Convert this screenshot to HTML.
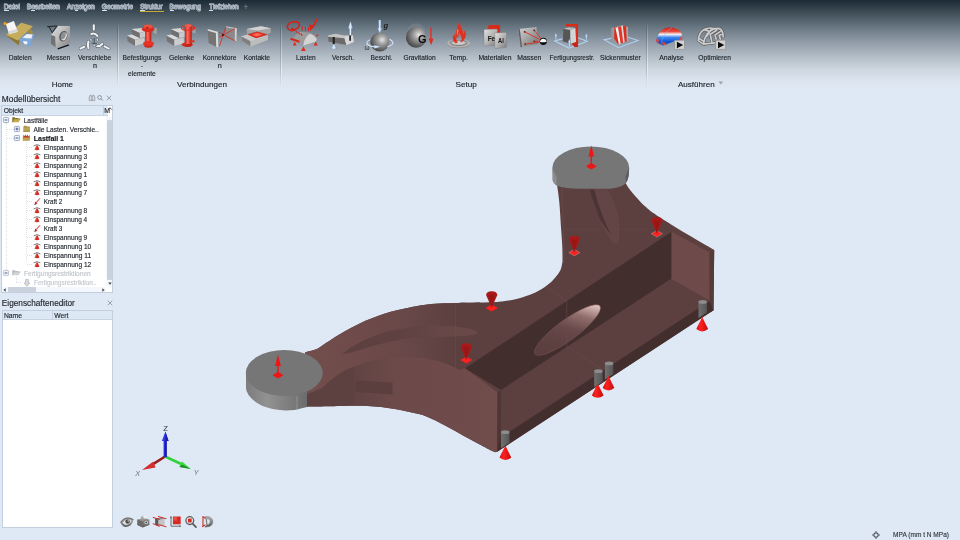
<!DOCTYPE html>
<html lang="de"><head><meta charset="utf-8"><title>Struktur</title>
<style>
html,body{margin:0;padding:0;}
body{width:960px;height:540px;overflow:hidden;background:#dfe9f5;font-family:"Liberation Sans",sans-serif;}
#app{position:relative;width:960px;height:540px;overflow:hidden;background:#dfe9f5;}
.r{position:absolute;}
svg{position:absolute;overflow:visible;}
#txt{pointer-events:none;will-change:transform;}
#icons{filter:blur(.3px);}
#txt text{font-family:"Liberation Sans",sans-serif;white-space:pre;}
.m{stroke:#dde8f4;stroke-opacity:.95;stroke-width:.9px;stroke-linejoin:round;filter:blur(.25px);}
.mc{fill-opacity:.5;}

#ribbon{position:absolute;left:0;top:0;width:960px;height:92px;background:linear-gradient(to bottom,#1b2a34 0px,#37464f 10px,#54626d 20px,#707e8a 30px,#8b97a3 40px,#a4aeb9 50px,#bac4cd 60px,#ced7e0 70px,#dbe4ee 80px,#dfe9f5 90px);}

</style></head>
<body>
<div id="app">
<div id="ribbon"></div>
<div class="r" style="left:3.8px;top:10.3px;width:5.01px;height:0.8px;background:#d3dfec;"></div>
<div class="r" style="left:31.28px;top:10.3px;width:3.82px;height:0.8px;background:#d3dfec;"></div>
<div class="r" style="left:75.15px;top:10.3px;width:3.33px;height:0.8px;background:#d3dfec;"></div>
<div class="r" style="left:101.7px;top:10.3px;width:5.21px;height:0.8px;background:#d3dfec;"></div>
<div class="r" style="left:140.3px;top:10.3px;width:4.23px;height:0.8px;background:#d3dfec;"></div>
<div class="r" style="left:169.5px;top:10.3px;width:4.45px;height:0.8px;background:#d3dfec;"></div>
<div class="r" style="left:209.2px;top:10.3px;width:3.94px;height:0.8px;background:#d3dfec;"></div>
<div class="r" style="left:140px;top:11.4px;width:23.5px;height:1.1px;background:#c9a93c;"></div>
<svg style="left:718px;top:81px" width="6" height="4" viewBox="0 0 6 4"><path d="M0.5 0.5h4.6l-2.3 3z" fill="#9aa3ad"/></svg>
<div class="r" style="left:117.3px;top:21px;width:1px;height:67px;background:linear-gradient(to bottom,rgba(60,75,88,0),rgba(60,75,88,.35) 15%,rgba(120,135,150,.35) 70%,rgba(150,165,180,0));"></div>
<div class="r" style="left:118.3px;top:21px;width:1px;height:67px;background:linear-gradient(to bottom,rgba(255,255,255,0),rgba(255,255,255,.18) 15%,rgba(255,255,255,.5) 70%,rgba(255,255,255,0));"></div>
<div class="r" style="left:280.3px;top:21px;width:1px;height:67px;background:linear-gradient(to bottom,rgba(60,75,88,0),rgba(60,75,88,.35) 15%,rgba(120,135,150,.35) 70%,rgba(150,165,180,0));"></div>
<div class="r" style="left:281.3px;top:21px;width:1px;height:67px;background:linear-gradient(to bottom,rgba(255,255,255,0),rgba(255,255,255,.18) 15%,rgba(255,255,255,.5) 70%,rgba(255,255,255,0));"></div>
<div class="r" style="left:646.3px;top:21px;width:1px;height:67px;background:linear-gradient(to bottom,rgba(60,75,88,0),rgba(60,75,88,.35) 15%,rgba(120,135,150,.35) 70%,rgba(150,165,180,0));"></div>
<div class="r" style="left:647.3px;top:21px;width:1px;height:67px;background:linear-gradient(to bottom,rgba(255,255,255,0),rgba(255,255,255,.18) 15%,rgba(255,255,255,.5) 70%,rgba(255,255,255,0));"></div>
<div class="r" style="left:0.5px;top:104.5px;width:112px;height:188.3px;background:#fff;box-sizing:border-box;border:1px solid #c3cfde;"></div>
<div class="r" style="left:1.5px;top:105.5px;width:110px;height:10.3px;background:#dde8f5;border-bottom:1px solid #c9d4e2;box-sizing:border-box;"></div>
<div class="r" style="left:103px;top:105.5px;width:1px;height:10px;background:#c3cfde;"></div>
<div class="r" style="left:106.3px;top:116px;width:5.7px;height:170.5px;background:#f4f7fb;"></div>
<div class="r" style="left:107px;top:119.5px;width:4.6px;height:160px;background:#c9d1dd;border-radius:1px;"></div>
<div class="r" style="left:108px;top:105.8px;width:4px;height:11px;background:#fff;"></div>
<svg style="left:107.5px;top:107px" width="4" height="3" viewBox="0 0 4 3"><path d="M0.3 2.6L2 0.6L3.7 2.6" fill="none" stroke="#444" stroke-width="0.9"/></svg>
<svg style="left:107.5px;top:282px" width="4" height="3" viewBox="0 0 4 3"><path d="M0.2 0.4H3.8L2 2.7z" fill="#444"/></svg>
<div class="r" style="left:1.5px;top:286.7px;width:104.8px;height:5.6px;background:#f4f7fb;"></div>
<div class="r" style="left:7.5px;top:287.2px;width:28px;height:4.8px;background:#c9d1dd;border-radius:1px;"></div>
<svg style="left:3px;top:288px" width="3" height="4" viewBox="0 0 3 4"><path d="M2.7 0.2V3.8L0.4 2z" fill="#444"/></svg>
<svg style="left:101.5px;top:288px" width="3" height="4" viewBox="0 0 3 4"><path d="M0.3 0.2V3.8L2.6 2z" fill="#444"/></svg>
<div class="r" style="left:1.5px;top:310px;width:111px;height:218px;background:#fff;box-sizing:border-box;border:1px solid #c3cfde;"></div>
<div class="r" style="left:2.5px;top:311px;width:109px;height:9px;background:#dde8f5;border-bottom:1px solid #c9d4e2;box-sizing:border-box;"></div>
<div class="r" style="left:51.6px;top:311px;width:1px;height:9px;background:#c3cfde;"></div>
<svg style="left:106.3px;top:94.8px" width="6" height="6" viewBox="-3 -3 6 6"><path d="M-2.3 -2.3L2.3 2.3M2.3 -2.3L-2.3 2.3" stroke="#8a9098" stroke-width="0.8" fill="none"/></svg>
<svg style="left:106.5px;top:299.5px" width="6" height="6" viewBox="-3 -3 6 6"><path d="M-2.3 -2.3L2.3 2.3M2.3 -2.3L-2.3 2.3" stroke="#8a9098" stroke-width="0.8" fill="none"/></svg>
<svg style="left:871px;top:530px" width="10" height="10" viewBox="-5 -5 10 10"><circle r="2.1" fill="none" stroke="#55595f" stroke-width="1.1"/><path d="M0 -4V-2.4M0 4V2.4M-4 0H-2.4M4 0H2.4" stroke="#55595f" stroke-width="1"/></svg>
<div class="r" style="left:6px;top:123px;width:1px;height:148px;background:repeating-linear-gradient(to bottom,#dde1e7 0 1px,transparent 1px 2px);"></div>
<div class="r" style="left:26px;top:141.5px;width:1px;height:120.5px;background:repeating-linear-gradient(to bottom,#dde1e7 0 1px,transparent 1px 2px);"></div>
<div class="r" style="left:7px;top:129px;width:7px;height:1px;background:repeating-linear-gradient(to right,#dde1e7 0 1px,transparent 1px 2px);"></div>
<div class="r" style="left:7px;top:138px;width:7px;height:1px;background:repeating-linear-gradient(to right,#dde1e7 0 1px,transparent 1px 2px);"></div>
<svg style="left:3.25px;top:117.1px" width="6" height="6" viewBox="-3 -3 6 6"><rect x="-2.6" y="-2.6" width="5.2" height="5.2" rx=".9" fill="#eef2fa" stroke="#8798b8" stroke-width="0.8"/><path d="M-1.4 0H1.4" stroke="#2a3a6a" stroke-width="0.8"/></svg>
<svg style="left:13.5px;top:126.1px" width="6" height="6" viewBox="-3 -3 6 6"><rect x="-2.6" y="-2.6" width="5.2" height="5.2" rx=".9" fill="#eef2fa" stroke="#8798b8" stroke-width="0.8"/><path d="M-1.4 0H1.4M0 -1.4V1.4" stroke="#2a3a6a" stroke-width="0.8"/></svg>
<svg style="left:13.5px;top:135.1px" width="6" height="6" viewBox="-3 -3 6 6"><rect x="-2.6" y="-2.6" width="5.2" height="5.2" rx=".9" fill="#eef2fa" stroke="#8798b8" stroke-width="0.8"/><path d="M-1.4 0H1.4" stroke="#2a3a6a" stroke-width="0.8"/></svg>
<svg style="left:12.3px;top:116.4px;opacity:1" width="9" height="7" viewBox="0 0 9 7"><path d="M0.3 6.2V1.2H2.6L3.3 2H6.2V3" fill="#7e6c2c"/><path d="M0.3 6.3L2 2.8H8.6L6.6 6.3z" fill="#c2aa52"/><path d="M0.3 6.3L2 2.8H8.6" fill="none" stroke="#7e6c2c" stroke-width=".5"/></svg>
<svg style="left:22.8px;top:124.8px" width="8" height="8" viewBox="0 0 8 8"><path d="M0.5 7V1.6L1.2 0.8H3.2L3.9 1.6H6.8V7z" fill="#a8924a"/><path d="M0.5 7V2.6H6.8V7z" fill="#bfa656"/><path d="M0.5 7L1.5 6H6.8" stroke="#8a7533" stroke-width=".5" fill="none"/></svg>
<svg style="left:22.3px;top:134.2px" width="9" height="7" viewBox="0 0 9 7"><path d="M0.8 6.6V2.8H7.6V6.6z" fill="#a68d42"/><path d="M0.6 6.6L1.6 3.6H8.4L7.3 6.6z" fill="#c0a553"/><path d="M1.2 3.2L1.6 0.6L2.8 2.6L3.6 0.2L4.6 2.6L5.8 0.4L6.3 2.7L7.8 0.9L7.6 3.4z" fill="#cc2a1e"/></svg>
<div class="r" style="left:27px;top:147px;width:5px;height:1px;background:repeating-linear-gradient(to right,#dde1e7 0 1px,transparent 1px 2px);"></div>
<svg style="left:32.8px;top:143.55px" width="8" height="7" viewBox="0 0 8 7"><path d="M0.6 1.9Q4 -0.6 7.4 1.9" fill="none" stroke="#6d7075" stroke-width="0.9"/><path d="M3.4 1.6H4.6L6.5 5.6Q4 7 1.5 5.6z" fill="#d42a22"/><path d="M3.6 2.2L2.3 5.4" stroke="#f08a80" stroke-width=".6"/></svg>
<div class="r" style="left:27px;top:156px;width:5px;height:1px;background:repeating-linear-gradient(to right,#dde1e7 0 1px,transparent 1px 2px);"></div>
<svg style="left:32.8px;top:152.55px" width="8" height="7" viewBox="0 0 8 7"><path d="M0.6 1.9Q4 -0.6 7.4 1.9" fill="none" stroke="#6d7075" stroke-width="0.9"/><path d="M3.4 1.6H4.6L6.5 5.6Q4 7 1.5 5.6z" fill="#d42a22"/><path d="M3.6 2.2L2.3 5.4" stroke="#f08a80" stroke-width=".6"/></svg>
<div class="r" style="left:27px;top:165px;width:5px;height:1px;background:repeating-linear-gradient(to right,#dde1e7 0 1px,transparent 1px 2px);"></div>
<svg style="left:32.8px;top:161.55px" width="8" height="7" viewBox="0 0 8 7"><path d="M0.6 1.9Q4 -0.6 7.4 1.9" fill="none" stroke="#6d7075" stroke-width="0.9"/><path d="M3.4 1.6H4.6L6.5 5.6Q4 7 1.5 5.6z" fill="#d42a22"/><path d="M3.6 2.2L2.3 5.4" stroke="#f08a80" stroke-width=".6"/></svg>
<div class="r" style="left:27px;top:174px;width:5px;height:1px;background:repeating-linear-gradient(to right,#dde1e7 0 1px,transparent 1px 2px);"></div>
<svg style="left:32.8px;top:170.55px" width="8" height="7" viewBox="0 0 8 7"><path d="M0.6 1.9Q4 -0.6 7.4 1.9" fill="none" stroke="#6d7075" stroke-width="0.9"/><path d="M3.4 1.6H4.6L6.5 5.6Q4 7 1.5 5.6z" fill="#d42a22"/><path d="M3.6 2.2L2.3 5.4" stroke="#f08a80" stroke-width=".6"/></svg>
<div class="r" style="left:27px;top:183px;width:5px;height:1px;background:repeating-linear-gradient(to right,#dde1e7 0 1px,transparent 1px 2px);"></div>
<svg style="left:32.8px;top:179.55px" width="8" height="7" viewBox="0 0 8 7"><path d="M0.6 1.9Q4 -0.6 7.4 1.9" fill="none" stroke="#6d7075" stroke-width="0.9"/><path d="M3.4 1.6H4.6L6.5 5.6Q4 7 1.5 5.6z" fill="#d42a22"/><path d="M3.6 2.2L2.3 5.4" stroke="#f08a80" stroke-width=".6"/></svg>
<div class="r" style="left:27px;top:192px;width:5px;height:1px;background:repeating-linear-gradient(to right,#dde1e7 0 1px,transparent 1px 2px);"></div>
<svg style="left:32.8px;top:188.55px" width="8" height="7" viewBox="0 0 8 7"><path d="M0.6 1.9Q4 -0.6 7.4 1.9" fill="none" stroke="#6d7075" stroke-width="0.9"/><path d="M3.4 1.6H4.6L6.5 5.6Q4 7 1.5 5.6z" fill="#d42a22"/><path d="M3.6 2.2L2.3 5.4" stroke="#f08a80" stroke-width=".6"/></svg>
<div class="r" style="left:27px;top:201px;width:5px;height:1px;background:repeating-linear-gradient(to right,#dde1e7 0 1px,transparent 1px 2px);"></div>
<svg style="left:32.6px;top:197.55px" width="8" height="7" viewBox="0 0 8 7"><path d="M7 0.3L3.2 4.6" stroke="#c8201a" stroke-width="1"/><path d="M1.6 6.4L2.2 3.6L4.6 5.6z" fill="#c8201a"/><path d="M0.8 6.2Q2 7 3.4 6.4" stroke="#777" stroke-width=".7" fill="none"/></svg>
<div class="r" style="left:27px;top:210px;width:5px;height:1px;background:repeating-linear-gradient(to right,#dde1e7 0 1px,transparent 1px 2px);"></div>
<svg style="left:32.8px;top:206.55px" width="8" height="7" viewBox="0 0 8 7"><path d="M0.6 1.9Q4 -0.6 7.4 1.9" fill="none" stroke="#6d7075" stroke-width="0.9"/><path d="M3.4 1.6H4.6L6.5 5.6Q4 7 1.5 5.6z" fill="#d42a22"/><path d="M3.6 2.2L2.3 5.4" stroke="#f08a80" stroke-width=".6"/></svg>
<div class="r" style="left:27px;top:219px;width:5px;height:1px;background:repeating-linear-gradient(to right,#dde1e7 0 1px,transparent 1px 2px);"></div>
<svg style="left:32.8px;top:215.55px" width="8" height="7" viewBox="0 0 8 7"><path d="M0.6 1.9Q4 -0.6 7.4 1.9" fill="none" stroke="#6d7075" stroke-width="0.9"/><path d="M3.4 1.6H4.6L6.5 5.6Q4 7 1.5 5.6z" fill="#d42a22"/><path d="M3.6 2.2L2.3 5.4" stroke="#f08a80" stroke-width=".6"/></svg>
<div class="r" style="left:27px;top:228px;width:5px;height:1px;background:repeating-linear-gradient(to right,#dde1e7 0 1px,transparent 1px 2px);"></div>
<svg style="left:32.6px;top:224.55px" width="8" height="7" viewBox="0 0 8 7"><path d="M7 0.3L3.2 4.6" stroke="#c8201a" stroke-width="1"/><path d="M1.6 6.4L2.2 3.6L4.6 5.6z" fill="#c8201a"/><path d="M0.8 6.2Q2 7 3.4 6.4" stroke="#777" stroke-width=".7" fill="none"/></svg>
<div class="r" style="left:27px;top:237px;width:5px;height:1px;background:repeating-linear-gradient(to right,#dde1e7 0 1px,transparent 1px 2px);"></div>
<svg style="left:32.8px;top:233.55px" width="8" height="7" viewBox="0 0 8 7"><path d="M0.6 1.9Q4 -0.6 7.4 1.9" fill="none" stroke="#6d7075" stroke-width="0.9"/><path d="M3.4 1.6H4.6L6.5 5.6Q4 7 1.5 5.6z" fill="#d42a22"/><path d="M3.6 2.2L2.3 5.4" stroke="#f08a80" stroke-width=".6"/></svg>
<div class="r" style="left:27px;top:246px;width:5px;height:1px;background:repeating-linear-gradient(to right,#dde1e7 0 1px,transparent 1px 2px);"></div>
<svg style="left:32.8px;top:242.55px" width="8" height="7" viewBox="0 0 8 7"><path d="M0.6 1.9Q4 -0.6 7.4 1.9" fill="none" stroke="#6d7075" stroke-width="0.9"/><path d="M3.4 1.6H4.6L6.5 5.6Q4 7 1.5 5.6z" fill="#d42a22"/><path d="M3.6 2.2L2.3 5.4" stroke="#f08a80" stroke-width=".6"/></svg>
<div class="r" style="left:27px;top:255px;width:5px;height:1px;background:repeating-linear-gradient(to right,#dde1e7 0 1px,transparent 1px 2px);"></div>
<svg style="left:32.8px;top:251.55px" width="8" height="7" viewBox="0 0 8 7"><path d="M0.6 1.9Q4 -0.6 7.4 1.9" fill="none" stroke="#6d7075" stroke-width="0.9"/><path d="M3.4 1.6H4.6L6.5 5.6Q4 7 1.5 5.6z" fill="#d42a22"/><path d="M3.6 2.2L2.3 5.4" stroke="#f08a80" stroke-width=".6"/></svg>
<div class="r" style="left:27px;top:264px;width:5px;height:1px;background:repeating-linear-gradient(to right,#dde1e7 0 1px,transparent 1px 2px);"></div>
<svg style="left:32.8px;top:260.55px" width="8" height="7" viewBox="0 0 8 7"><path d="M0.6 1.9Q4 -0.6 7.4 1.9" fill="none" stroke="#6d7075" stroke-width="0.9"/><path d="M3.4 1.6H4.6L6.5 5.6Q4 7 1.5 5.6z" fill="#d42a22"/><path d="M3.6 2.2L2.3 5.4" stroke="#f08a80" stroke-width=".6"/></svg>
<div class="r" style="left:16px;top:282px;width:6px;height:1px;background:repeating-linear-gradient(to right,#dde1e7 0 1px,transparent 1px 2px);"></div>
<div class="r" style="left:16px;top:277px;width:1px;height:5px;background:repeating-linear-gradient(to bottom,#dde1e7 0 1px,transparent 1px 2px);"></div>
<svg style="left:3.25px;top:270.1px" width="6" height="6" viewBox="-3 -3 6 6"><rect x="-2.6" y="-2.6" width="5.2" height="5.2" rx=".9" fill="#eef2fa" stroke="#b0b8c4" stroke-width="0.8"/><path d="M-1.4 0H1.4" stroke="#2a3a6a" stroke-width="0.8"/></svg>
<svg style="left:12.3px;top:269.4px;opacity:1" width="9" height="7" viewBox="0 0 9 7"><path d="M0.3 6.2V1.2H2.6L3.3 2H6.2V3" fill="#b5b8bc"/><path d="M0.3 6.3L2 2.8H8.6L6.6 6.3z" fill="#cfd2d6"/><path d="M0.3 6.3L2 2.8H8.6" fill="none" stroke="#b5b8bc" stroke-width=".5"/></svg>
<svg style="left:23px;top:278.6px" width="8" height="8" viewBox="0 0 8 8"><path d="M2.6 0.5H5.4V4H7L4 7.4L1 4H2.6z" fill="#d8dbde" stroke="#a9adb2" stroke-width=".6"/></svg>
<svg id="model" width="960" height="540" viewBox="0 0 960 540" style="left:0;top:0">
<defs>
<linearGradient id="gTop" gradientUnits="userSpaceOnUse" x1="305" y1="0" x2="480" y2="0">
<stop offset="0" stop-color="#724e4c"/><stop offset=".314" stop-color="#6e4b4a"/><stop offset=".537" stop-color="#694848"/><stop offset=".686" stop-color="#644545"/><stop offset=".794" stop-color="#5f4141"/><stop offset=".863" stop-color="#5c3f3f"/><stop offset="1" stop-color="#5c3f3f"/>
</linearGradient>
<linearGradient id="gGroove" gradientUnits="userSpaceOnUse" x1="341" y1="0" x2="480" y2="0">
<stop offset="0" stop-color="#5c3f3f"/><stop offset=".4" stop-color="#5f4141"/><stop offset=".7" stop-color="#664646"/><stop offset="1" stop-color="#6b4949"/>
</linearGradient>
<linearGradient id="gFront" gradientUnits="userSpaceOnUse" x1="307" y1="0" x2="497" y2="0">
<stop offset="0" stop-color="#5d4040"/><stop offset=".247" stop-color="#5d4040"/><stop offset=".249" stop-color="#614343"/><stop offset=".46" stop-color="#6c4a49"/><stop offset="1" stop-color="#704c4b"/>
</linearGradient>
<linearGradient id="gCyl" gradientUnits="userSpaceOnUse" x1="246" y1="0" x2="307" y2="0">
<stop offset="0" stop-color="#7c7c7c"/><stop offset=".35" stop-color="#929292"/><stop offset="1" stop-color="#6c6c6c"/>
</linearGradient>
<linearGradient id="gHole" gradientUnits="userSpaceOnUse" x1="537" y1="352" x2="598" y2="306">
<stop offset="0" stop-color="#583c3c"/><stop offset=".3" stop-color="#5e4141"/><stop offset=".52" stop-color="#694949"/><stop offset=".72" stop-color="#8f6e6c"/><stop offset=".88" stop-color="#d6b6b2"/><stop offset="1" stop-color="#f5e4e0"/>
</linearGradient>
<linearGradient id="gPin" x1="0" y1="0" x2="1" y2="0"><stop offset="0" stop-color="#707070"/><stop offset="1" stop-color="#565656"/></linearGradient>
<linearGradient id="gCone" x1="0" y1="0" x2="1" y2="0"><stop offset="0" stop-color="#d01010"/><stop offset=".35" stop-color="#ff2020"/><stop offset="1" stop-color="#c00c0c"/></linearGradient>
<g id="pinA"><path d="M0 0.8V17.6L8.4 12.2V0.8z" fill="url(#gPin)"/><ellipse cx="4.2" cy="1.6" rx="4.2" ry="1.9" fill="#8c8c8c"/></g>
<g id="coneUp"><path d="M0 0L-5.9 12Q0 16.8 5.9 12z" fill="url(#gCone)"/></g>
<g id="coneDn"><path d="M0 0L-5.6 -13Q-5.4 -16.6 0 -16.8Q5.4 -16.6 5.6 -13z" fill="#a81a1a"/><path d="M0 -1L-3.2 -13.5Q0 -12 3.2 -13.5z" fill="#8e1414" opacity=".6"/></g>
</defs>
<path id="sil" fill="#5c3f3f" d="M305.2 352.2C307.1 351.7 313.4 350.5 316.8 349.0C320.2 347.5 322.2 345.5 325.9 343.1C329.6 340.7 334.6 337.3 338.9 334.7C343.2 332.1 347.5 329.9 351.8 327.6C356.1 325.3 360.5 323.1 364.8 321.1C369.1 319.2 373.5 317.4 377.8 315.9C382.1 314.3 386.4 313.0 390.7 311.8C395.0 310.6 398.8 309.8 403.7 308.8C408.6 307.8 414.8 306.4 420.0 305.6C425.2 304.8 429.2 304.2 435.0 303.8C440.8 303.4 447.5 303.2 455.0 303.0C462.5 302.8 473.0 302.7 480.0 302.5C487.0 302.3 491.4 302.5 497.0 302.0C502.6 301.5 507.8 300.9 513.3 299.7C518.8 298.5 525.5 296.3 530.0 294.7C534.5 293.1 536.7 291.9 540.0 290.0C543.3 288.1 547.2 285.4 550.0 283.0C552.8 280.6 554.9 278.1 556.7 275.8C558.5 273.5 559.8 271.6 560.8 269.2C561.8 266.8 562.2 262.9 562.5 261.7C562.5 259.2 562.5 252.0 562.3 246.7C562.1 241.4 561.7 237.4 561.2 230.0C560.7 222.6 560.0 209.5 559.3 202.2C558.6 194.9 557.6 188.7 557.2 186.0L625.5 183.0C626.0 183.8 627.4 186.2 628.6 188.0C629.9 189.8 631.5 191.7 633.0 193.5C634.5 195.3 636.2 197.1 637.5 198.6C638.8 200.1 639.5 200.9 641.0 202.4C642.5 203.9 644.5 205.8 646.5 207.6C648.5 209.4 649.2 210.2 653.3 213.0C657.4 215.8 664.4 220.3 671.1 224.4C677.8 228.5 686.1 233.5 693.3 237.8C700.5 242.1 710.7 248.0 714.2 250.0L713.4 310.2L497.0 452.0C495.9 452.2 494.9 452.4 492.2 451.1C489.5 449.8 484.2 446.9 480.2 444.8C476.2 442.7 472.1 440.5 468.1 438.3C464.1 436.1 460.1 433.7 456.1 431.5C452.1 429.3 448.1 427.1 444.1 425.0C440.1 422.9 435.7 420.7 432.0 419.0C428.3 417.3 425.8 416.0 421.9 414.8C417.9 413.6 412.8 412.6 408.3 411.7C403.8 410.8 399.3 409.9 394.8 409.1C390.3 408.3 385.7 407.6 381.2 407.1C376.7 406.6 372.2 406.2 367.7 406.0C363.2 405.8 361.0 405.6 354.2 405.7C347.4 405.8 335.0 406.1 327.1 406.3C319.2 406.5 310.2 406.6 306.8 406.7L300 390z"/>
<path fill="url(#gTop)" d="M305.2 352.2C307.1 351.7 313.4 350.5 316.8 349.0C320.2 347.5 322.2 345.5 325.9 343.1C329.6 340.7 334.6 337.3 338.9 334.7C343.2 332.1 347.5 329.9 351.8 327.6C356.1 325.3 360.5 323.1 364.8 321.1C369.1 319.2 373.5 317.4 377.8 315.9C382.1 314.3 386.4 313.0 390.7 311.8C395.0 310.6 398.8 309.8 403.7 308.8C408.6 307.8 414.8 306.4 420.0 305.6C425.2 304.8 429.2 304.2 435.0 303.8C440.8 303.4 447.5 303.2 455.0 303.0C462.5 302.8 475.8 302.6 480.0 302.5L480 345L470 372L460.0 370.0L448.0 364.5L433.3 360.0L418.0 357.8L400.0 357.3L383.3 358.8L366.7 362.5L346.0 370.0L333.3 378.3L321.7 388.3L314.0 391.5L307.0 394.5L300 392z"/>
<path fill="url(#gGroove)" d="M341.5 354.8C343.2 353.5 347.9 349.5 351.8 347.0C355.7 344.5 360.5 341.9 364.8 339.9C369.1 337.8 373.5 336.2 377.8 334.7C382.1 333.2 386.4 331.8 390.7 330.8C395.0 329.8 398.0 329.4 403.7 328.5C409.4 327.6 418.8 326.2 424.8 325.7C430.9 325.2 434.6 325.4 440.0 325.6C445.4 325.8 451.9 326.1 457.2 326.8C462.5 327.5 468.4 328.5 472.0 329.6C475.6 330.7 477.5 332.7 478.6 333.3C477.5 333.6 474.5 334.6 472.0 335.0C469.5 335.4 469.4 335.5 463.7 335.9C458.0 336.3 446.4 336.9 437.8 337.2C429.2 337.5 418.6 337.4 411.8 337.9C405.0 338.4 402.9 339.1 397.2 340.2C391.5 341.3 384.3 342.9 377.8 344.6C371.3 346.3 364.4 348.9 358.3 350.6C352.2 352.3 344.3 354.1 341.5 354.8z"/>
<path fill="url(#gFront)" d="M307.0 394.5C308.2 394.0 311.6 392.5 314.0 391.5C316.4 390.5 318.5 390.5 321.7 388.3C324.9 386.1 329.2 381.4 333.3 378.3C337.4 375.2 340.4 372.6 346.0 370.0C351.6 367.4 360.5 364.4 366.7 362.5C372.9 360.6 377.8 359.7 383.3 358.8C388.9 357.9 394.2 357.5 400.0 357.3C405.8 357.1 412.4 357.4 418.0 357.8C423.6 358.2 428.3 358.9 433.3 360.0C438.3 361.1 443.6 362.8 448.0 364.5C452.4 366.2 458.0 369.1 460.0 370.0L465 368.3L497.6 392.6L497 452C495.9 452.2 494.9 452.4 492.2 451.1C489.5 449.8 484.2 446.9 480.2 444.8C476.2 442.7 472.1 440.5 468.1 438.3C464.1 436.1 460.1 433.7 456.1 431.5C452.1 429.3 448.1 427.1 444.1 425.0C440.1 422.9 435.7 420.7 432.0 419.0C428.3 417.3 425.8 416.0 421.9 414.8C417.9 413.6 412.8 412.6 408.3 411.7C403.8 410.8 399.3 409.9 394.8 409.1C390.3 408.3 385.7 407.6 381.2 407.1C376.7 406.6 372.2 406.2 367.7 406.0C363.2 405.8 361.0 405.6 354.2 405.7C347.4 405.8 335.0 406.1 327.1 406.3C319.2 406.5 310.2 406.6 306.8 406.7z"/>
<path fill="#5b3e3e" d="M355 380.8L392.5 382.5V394.6L355 391.7z"/>
<path d="M455.5 303V368" stroke="#7a5656" stroke-width=".5" opacity=".6"/>
<!-- interior dark wall -->
<path fill="#432e2e" d="M465 368.3L671.7 231.7V278.8L501.2 390z"/>
<!-- floor -->
<path fill="#5c3f3f" d="M500.6 390.4L671.2 278.8L709.2 300L709.2 301.4L500.6 437.6z"/>
<!-- far end wall inner -->
<path fill="#6e4b4a" d="M671.5 231.7L709.6 252.6V300.4L671.5 279z"/>
<path fill="#553a3a" d="M709.6 252.6L714.2 250L713.6 310.2L709.6 312.8z"/>
<!-- outer dark band -->
<path fill="#432e2e" d="M500.6 437.6L709.4 301.2L713.4 310.2L497 451.8z"/>
<path fill="#4e3636" d="M497.6 392.6L500.8 390.4V438L497 452z"/>
<!-- hole -->
<ellipse cx="567.5" cy="330" rx="40.4" ry="10.2" transform="rotate(-36.4 567.5 330)" fill="url(#gHole)" stroke="#7a5656" stroke-width=".5"/>
<path d="M546.7 287.5L566.7 300.8V346.7L602 369" fill="none" stroke="#6d4c4c" stroke-width=".5"/>
<!-- fin on upper arm -->
<path fill="#634545" stroke="#6f5050" stroke-width=".4" d="M589.2 189.2L606.7 190Q613.3 200 617.5 215Q619.6 228.3 618.3 240L616.7 243.3L613.3 242.5Q606.7 233.3 599.2 218.3Q593.3 201.7 589.2 189.2z"/>
<path fill="#4b3434" d="M589.2 189.2L594.3 189.4Q597.5 203 603 217Q607 227 611 235Q604 226 599.2 218.3Q593.3 201.7 589.2 189.2z"/>
<path fill="none" stroke="#745454" stroke-width=".5" opacity=".8" d="M561.5 187Q562.8 210 563.6 235Q564.2 255 563.8 263"/>
<path fill="none" stroke="#6c4c4c" stroke-width=".4" d="M565 229.2H600M618 229.2H650"/>
<!-- discs -->
<path fill="url(#gCyl)" d="M246 373V387.6Q246 397.2 262 405.8Q284 414.4 307 407V392z"/>
<path d="M297 396V410.2" stroke="#a8a8a8" stroke-width=".6"/>
<ellipse cx="284.3" cy="373" rx="38.5" ry="23" fill="#767676"/>
<path fill="#767676" d="M552.4 167.5A38.4 21 0 0 1 629.2 167.5L628.6 176Q627.6 181 625.8 183.3Q623.5 185.6 620 186.7Q615 188.4 610 188.7L580 188.7Q572 188.6 566.7 188Q560.5 187.2 556.7 185.8Q553.8 184 553.3 180z"/>
<path fill="#8c8c8c" d="M552.4 168V180Q553 183.5 556.5 185.6L556.8 178z"/>
<path fill="#5c5c5c" d="M629.2 168L628.6 176Q627.6 181 625.8 183.3L625.6 176z"/>
<!-- arrows -->
<g fill="#ee1515"><path d="M278 371.8L283.4 375.3L278 378.6L272.6 375.3z"/><path d="M277.3 375V364H278.7V375z"/><path d="M278 354.8L280.9 366H275.1z"/>
<path d="M591.3 163L596.7 166.3L591.3 169.6L585.9 166.3z"/><path d="M590.6 166V155H592V166z"/><path d="M591.3 145.6L594.1 156.5H588.5z"/></g>
<!-- cones on top -->
<g><path d="M486.3 308L491.7 304.9L497.09999999999997 308L491.7 311.1z" fill="#ff2020" stroke="#ff2020" stroke-width=".8" stroke-linejoin="round"/><use href="#coneDn" x="491.7" y="308"/></g>
<g><path d="M460.90000000000003 360L466.3 356.9L471.7 360L466.3 363.1z" fill="#ff2020" stroke="#ff2020" stroke-width=".8" stroke-linejoin="round"/><use href="#coneDn" x="466.3" y="360"/></g>
<g><path d="M568.7 252.6L574.3 249.3L579.9 252.6L574.3 255.9z" fill="#ff2020" stroke="#a58f8f" stroke-width=".6" stroke-linejoin="round"/><use href="#coneDn" x="574.3" y="252.6"/></g>
<g><path d="M651.3 233.7L656.9 230.4L662.5 233.7L656.9 237z" fill="#ff2020" stroke="#a58f8f" stroke-width=".6" stroke-linejoin="round"/><use href="#coneDn" x="656.9" y="233.7"/></g>
<!-- pins and cones below -->
<use href="#pinA" x="501" y="430.6"/><use href="#coneUp" x="505.4" y="445.6"/>
<use href="#pinA" x="594.2" y="369.6"/><use href="#coneUp" x="597.7" y="383.4"/>
<use href="#pinA" x="604.9" y="361.8"/><use href="#coneUp" x="608.5" y="376"/>
<use href="#pinA" x="698.5" y="300.4"/><use href="#coneUp" x="702.2" y="317"/>
</svg>

<svg id="icons" width="960" height="100" viewBox="0 0 960 100" style="left:0;top:0">
<defs>
<linearGradient id="mG" x1="0" y1="0" x2="1" y2="1"><stop offset="0" stop-color="#e4e4e4"/><stop offset=".5" stop-color="#b4b4b4"/><stop offset="1" stop-color="#7a7a7a"/></linearGradient>
<linearGradient id="mH" x1="0" y1="0" x2="1" y2="0"><stop offset="0" stop-color="#6a6a6a"/><stop offset="1" stop-color="#9a9a9a"/></linearGradient>
<linearGradient id="rB" x1="0" y1="0" x2="1" y2="0"><stop offset="0" stop-color="#c82014"/><stop offset=".4" stop-color="#ff6a58"/><stop offset="1" stop-color="#b01810"/></linearGradient>
<radialGradient id="sph" cx=".62" cy=".38" r=".7"><stop offset="0" stop-color="#e6e6e6"/><stop offset=".3" stop-color="#a6a6a6"/><stop offset=".75" stop-color="#5e5e5e"/><stop offset="1" stop-color="#3e3e3e"/></radialGradient>
<linearGradient id="blA" x1="0" y1="0" x2="1" y2="0"><stop offset="0" stop-color="#8fb4dc"/><stop offset=".5" stop-color="#e4f0fc"/><stop offset="1" stop-color="#7aa0cc"/></linearGradient>
<linearGradient id="dome" x1="0" y1="0" x2="0" y2="1"><stop offset="0" stop-color="#d41c10"/><stop offset=".22" stop-color="#e84a3a"/><stop offset=".38" stop-color="#f6f0f0"/><stop offset=".55" stop-color="#3a86f0"/><stop offset=".8" stop-color="#0c50d0"/><stop offset="1" stop-color="#1a48b8"/></linearGradient>
<g id="blocks">
<path d="M11.5 13.1L23 11.9L25.3 15.4L19.4 17z" fill="#d6d6d6"/><path d="M11.5 13.5L19.8 17V22.2L11.9 18.6z" fill="#707070"/><path d="M19.8 17L25.3 15.6V21L19.8 22.2z" fill="#cacaca"/>
<path d="M7.1 19.4L11.9 18.6L19.8 22.2L15 23.8z" fill="#dadada"/><path d="M7.1 20L15 23.8V30.1L7.5 25.3z" fill="#747474"/><path d="M15 23.8L24.5 21.8V27.3L15 30.1z" fill="#cccccc"/>
</g>
<g id="play"><rect x="0" y="-0.6" width="10" height="9.2" rx=".8" fill="#d2d2d2" stroke="#8e8e8e" stroke-width=".7"/><path d="M2.4 1V7.4L8.7 4.2z" fill="#080808"/></g>
<linearGradient id="tl" x1="0" y1="0" x2="1" y2="1"><stop offset="0" stop-color="#d2d2d2"/><stop offset=".5" stop-color="#a4a4a4"/><stop offset="1" stop-color="#6e6e6e"/></linearGradient>
<linearGradient id="ms" x1="0" y1="0" x2="1" y2="1"><stop offset="0" stop-color="#dcdcdc"/><stop offset=".5" stop-color="#b0b0b0"/><stop offset="1" stop-color="#808080"/></linearGradient>
</defs>
<!-- 1 Dateien -->
<g>
<path d="M6.2 35.6L18.6 45.2L19.6 40.6L8 33.5z" fill="#8c7636"/>
<path d="M5.9 35L21.4 22.7L32.9 26.3L17.8 40.5z" fill="#c6ad5e"/>
<path d="M30 28.6L33.2 32.6L31 34.5L27 32z" fill="#a48c46"/>
<path d="M19 39.8L26.1 33.8L34 34.6L30.5 46.1L25.3 45.3z" fill="#7aa6d8"/>
<path d="M22.5 37.5L27 33.9L32.6 34.6L31.4 38.6L26 38.2z" fill="#eef2f8"/>
<path d="M23 41L27.5 41.6L27 44.4L24.2 44z" fill="#f2f5fa"/>
<path d="M5.9 23.9L13.9 21.1L17.8 31.8L9.1 34.2z" fill="#f6f6f6"/>
<path d="M9.1 34.2L17.8 31.8L16.8 29L8.2 31.6z" fill="#d8d8d8"/>
<circle cx="5.1" cy="23.5" r="1.6" fill="#f2a210"/>
</g>
<!-- 2 Messen -->
<g>
<path d="M51.1 35L58.2 25.9H69.7L70.1 42.1L55.8 47.3L50.7 43.7z" fill="url(#mG)"/>
<path d="M51.1 35L55.4 36.6L55.8 47.3L50.7 43.7z" fill="#727272"/>
<path d="M55.4 36.6L62.5 26.3L69.7 25.9L70.1 42.1L55.8 47.3z" fill="url(#ms)"/>
<ellipse cx="63.3" cy="36.2" rx="3.9" ry="5.4" transform="rotate(18 63.3 36.2)" fill="#565656"/>
<ellipse cx="64" cy="36.4" rx="2.7" ry="4.2" transform="rotate(18 64 36.4)" fill="#d8d8d8"/>
<ellipse cx="63.2" cy="35.6" rx="2.3" ry="3.7" transform="rotate(18 63.2 35.6)" fill="#8a8f96"/>
<path d="M47.1 26.7L57 25.9M49.1 27L52.3 32.6L56.6 26.3" fill="none" stroke="#1a1a1a" stroke-width=".9"/>
<path d="M57.8 48.9L68.9 44.9" stroke="#111" stroke-width="1.3"/>
</g>
<!-- 3 Verschieben -->
<g fill="none" stroke-linecap="round">
<g stroke="#55606a" stroke-width="3.2"><path d="M93.8 25.3V29.6M91.3 33.9Q95 32.6 97.4 35.8M88.4 41.6Q87.4 45 88.4 48.2M80.4 48.6L84.3 46.8M97.2 46.3Q100.6 46.2 102.3 43.9M104.5 46.4L108.8 48.6"/></g>
<g stroke="#f2f2f2" stroke-width="2.1"><path d="M93.8 25.3V29.6M91.3 33.9Q95 32.6 97.4 35.8M88.4 41.6Q87.4 45 88.4 48.2M80.4 48.6L84.3 46.8M97.2 46.3Q100.6 46.2 102.3 43.9M104.5 46.4L108.8 48.6"/></g>
<ellipse cx="91" cy="39.8" rx="1.1" ry="1.5" fill="#f2f2f2" stroke="#55606a" stroke-width=".6"/><ellipse cx="97.4" cy="39.8" rx="1.1" ry="1.5" fill="#f2f2f2" stroke="#55606a" stroke-width=".6"/>
<ellipse cx="94.5" cy="45.3" rx="1.5" ry="1" fill="#f2f2f2" stroke="#55606a" stroke-width=".6"/>
<path d="M94.2 38.5V43.5M92 43.3H96.5" stroke="#3a444c" stroke-width=".8"/>
</g>
<!-- 4 Befestigungselemente -->
<g>
<use href="#blocks" x="120" y="16"/>
<path d="M153.3 28H156.8V34.2L153.3 33z" fill="#a2a2a2"/>
<rect x="145.3" y="30" width="6" height="14.5" fill="url(#rB)"/>
<ellipse cx="148.5" cy="45.6" rx="4.3" ry="2.2" fill="#c82418"/>
<ellipse cx="148.5" cy="43.7" rx="5.5" ry="2.7" fill="#e43426"/>
<ellipse cx="148.1" cy="29.3" rx="6.3" ry="2.8" fill="#d82c1e"/>
<rect x="143.8" y="26.2" width="8.6" height="2.6" fill="#e03424"/>
<ellipse cx="148.1" cy="26.4" rx="4.3" ry="1.9" fill="#f05040"/>
<ellipse cx="147.4" cy="27.8" rx="1.3" ry=".8" fill="#a01810"/>
</g>
<!-- 5 Gelenke -->
<g>
<use href="#blocks" x="159.3" y="16"/>
<path d="M192.5 28.3H195.5V33.5L192.5 32.5z" fill="#a2a2a2"/>
<ellipse cx="187.3" cy="44.6" rx="5.5" ry="2.4" fill="#d42a1c"/>
<rect x="184.9" y="26" width="6.8" height="19.3" rx="1" fill="url(#rB)"/>
<ellipse cx="188.3" cy="45.2" rx="3.4" ry="1.3" fill="#c42216"/>
<ellipse cx="188.1" cy="28" rx="6.7" ry="2.3" fill="none" stroke="#e23022" stroke-width="1.1"/>
<ellipse cx="188.3" cy="25.6" rx="3.4" ry="1.6" fill="#f25848"/>
<circle cx="193.3" cy="41.3" r="1.3" fill="#e03022"/>
<ellipse cx="193.6" cy="28" rx="1.6" ry="1.1" fill="#e03022"/>
</g>
<!-- 6 Konnektoren -->
<g>
<path d="M225.7 26.3L236.8 28.3L236.4 41.3L226 37.5z" fill="#8a8a8a"/>
<path d="M235 28L236.8 28.3L236.4 41.3L234.8 40.7z" fill="#d4d4d4"/>
<path d="M225.7 26.3L236.8 28.3L235.6 29L226.5 27.4z" fill="#c4c4c4"/>
<path d="M219 32.2L234.8 40.9M219 37.4L234.8 28.7M219.4 46.1L225.9 26.9" stroke="#d63226" stroke-width=".9" fill="none"/>
<path d="M207.5 29.1L217.8 31.8L218.2 47.7L208.7 42.9z" fill="#747474"/>
<path d="M207.5 29.1L217.8 31.8L218.2 47.7L216.2 46.7L215.9 33L208 30.8z" fill="#dcdcdc"/>
<circle cx="222.9" cy="35" r="1.1" fill="#3a1010"/>
</g>
<!-- 7 Kontakte -->
<g>
<path d="M246.7 29.1L260.9 26.3L270.8 28.3V32.8L267.7 34.2L257 31.6L247 34z" fill="#a4a4a4"/>
<path d="M246.7 29.1L260.9 26.3L270.8 28.3L258 30.6z" fill="#d2d2d2"/>
<path d="M241.5 36.2L247.5 34.6L256.2 38.2L267.7 35V39.8L250.6 46.5L241.9 40.9z" fill="#c8c8c8"/>
<path d="M241.5 36.4L250.6 41.3V46.5L241.9 40.9z" fill="#7e7e7e"/>
<path d="M250.6 41.3L267.7 35.4V39.8L250.6 46.5z" fill="#bcbcbc"/>
<path d="M247.5 34.6L257 31.8L267.7 34.6L256.2 38.2z" fill="#e22a1a"/>
<path d="M252 34.6L257 33L262.5 34.6L256.5 36.6z" fill="#ff7a6a" opacity=".8"/>
</g>
<!-- 8 Lasten -->
<g>
<path d="M294.3 37L299.4 31.8L311.7 33L316.9 39L315.7 41.7L303 45.7L293.9 39.8z" fill="#8e8e8e"/>
<path d="M303 45.7Q303.3 38 308 34.2Q312.5 32.6 316.9 39L315.7 41.7z" fill="#d2d2d2"/>
<path d="M294.3 37L299.4 31.8L311.7 33Q305 35 303 45.7L293.9 39.8z" fill="#9c9c9c"/>
<path d="M290.5 38.8L299.5 41.8" stroke="#d8281c" stroke-width="2.2"/>
<ellipse cx="293.3" cy="25.9" rx="6.2" ry="4" transform="rotate(-18 293.3 25.9)" fill="none" stroke="#d0241c" stroke-width="1.6"/>
<path d="M291.4 27.2L296.6 30L291.2 31.8z" fill="#d0241c"/>
<path d="M317.4 19L312 28" stroke="#dc241a" stroke-width="1.8"/>
<path d="M314.8 25.5L310 31.2L309.2 24.4z" fill="#dc241a"/>
<path d="M302.2 26.2V30.4M305.4 26.7V30.8M308.5 27.2V31.2M296 31L297.4 33M298.4 32.4L299.8 34.4M300.8 33.6L302.2 35.6M316.3 36L318.4 34.6" stroke="#dc241a" stroke-width="1.1"/>
<path d="M294.7 41.8L292.8 45.4H296.6zM303.4 46.5L301 51H305.8zM315.7 41.6L313.6 45.6H317.8z" fill="#e02a1e"/>
</g>
<!-- 9 Versch. -->
<g>
<path d="M327.9 35.4L335.5 33.8L344.2 35.4L352.9 35L353.7 42.1L346.5 44.9L328.3 41.7z" fill="#c4c4c4"/>
<path d="M328 36.8L344.4 38.2L346.3 44.9L328.3 41.7z" fill="#6a6a6a"/>
<path d="M344.4 36.4L352.9 35.6L353.7 42.1L346.5 44.9z" fill="#d8d8d8"/>
<rect x="332.7" y="37" width="2" height="7" fill="#1e1e1e"/>
<rect x="349.2" y="34.6" width="1.8" height="6.2" fill="#2a2a2a"/>
<path d="M349.2 35.5V28.7H347.6L350.5 21.1L353.2 28.7H351.6V35.5z" fill="url(#blA)" stroke="#4a6078" stroke-width=".4"/>
<path d="M333.9 44.1L330.8 48.3Q333.9 50.2 337 48.3z" fill="url(#blA)" stroke="#6a84a0" stroke-width=".3"/>
</g>
<!-- 10 Beschl. -->
<g>
<path d="M367 42.2A13.3 4.4 0 0 1 373 39" fill="none" stroke="#c4dcf4" stroke-width="1.2"/>
<circle cx="379.8" cy="42.1" r="9.5" fill="url(#sph)"/>
<path d="M366.6 42.6Q367 46.5 378 47.2" fill="none" stroke="#cfe2f6" stroke-width="1.3"/>
<path d="M373.8 45.2L380.6 46.6L374.4 48.6z" fill="#d4e6f8" stroke="#7a9cc0" stroke-width=".3"/>
<path d="M389.5 39.2Q393.8 41.5 392.6 44Q391 46 387.4 46.6" fill="none" stroke="#cfe2f6" stroke-width="1.2"/>
<path d="M378.7 20V28H377.4L379.8 33.2L382.2 28H380.9V20z" fill="url(#blA)" stroke="#6a88a8" stroke-width=".3"/>
</g>
<!-- 11 Gravitation -->
<g>
<circle cx="416.2" cy="32.5" r="9.2" fill="#8a949c" opacity=".35"/>
<circle cx="416.2" cy="37.4" r="10.3" fill="url(#sph)"/>
<path d="M430.2 27.5H431.6V38.6H433.6L431.1 45.3L428.6 38.6H430.2z" fill="#dc3020"/>
</g>
<!-- 12 Temp. -->
<g>
<ellipse cx="458.6" cy="43.8" rx="11.5" ry="4.4" fill="#8c8c8c"/>
<ellipse cx="458.6" cy="43.2" rx="11.5" ry="4.2" fill="#b4b4b4"/>
<ellipse cx="458.6" cy="42.8" rx="8.6" ry="2.7" fill="none" stroke="#7a7a7a" stroke-width="1"/>
<ellipse cx="458.6" cy="42.9" rx="5.5" ry="1.6" fill="#cfcfcf"/>
<path d="M455.4 43Q451.5 38.5 454.4 34.4Q454.8 37 456 37.6Q455.3 32 457.6 28.5Q458.2 24.5 459.4 22.3Q460 27 462.2 30.5Q463 33 462.8 35Q464.4 33.5 465 30.7Q466.4 35.5 464.2 39Q462.6 41.6 460.8 42.2Q463.2 38.8 461.2 36Q459.6 33.6 459.3 31Q457.8 34 458 37Q456.6 36.8 456.2 35.6Q455.2 39.8 457.4 42.6z" fill="#e2301e" stroke="#e2301e" stroke-width=".7" stroke-linejoin="round"/>
<path d="M457.8 28.8Q456.4 33 457 36.4Q457.4 32.5 458.6 30.5z" fill="#ff9a8a"/>
</g>
<!-- 13 Materialien -->
<g>
<rect x="488.3" y="25.1" width="11.8" height="9" rx="1" fill="#da2a18"/>
<path d="M484 30.2Q484 29.4 484.8 29.4L496.6 29Q497.4 29 497.4 29.8V44.2Q497.4 45 496.6 45.2L485 46Q484 46 484 45.2z" fill="url(#mG)" stroke="#7c7c7c" stroke-width=".4"/>
<path d="M494.8 34Q494.8 33.2 495.6 33L505.6 32.4Q506.5 32.4 506.5 33.2V46.6Q506.5 47.4 505.7 47.6L495.8 48.6Q494.8 48.6 494.8 47.8z" fill="url(#mG)" stroke="#7c7c7c" stroke-width=".4"/>
</g>
<!-- 14 Massen -->
<g>
<path d="M518.3 29.1L536.5 27.1L538.1 43.7L520.7 47.3z" fill="url(#tl)"/>
<path d="M518.3 29.1L519.8 29L522 46.9L520.7 47.3z" fill="#5e5e5e"/>
<path d="M524.7 31.8L543 41M534.2 30.3L543 40.6M525.1 44.1L543 41.6M534.2 41.3L543 41.3" stroke="#d83020" stroke-width=".9" fill="none"/>
<circle cx="524.7" cy="31.8" r=".9" fill="#5a1a14"/><circle cx="534.2" cy="30.3" r=".9" fill="#5a1a14"/><circle cx="525.1" cy="44.1" r=".9" fill="#5a1a14"/><circle cx="534.2" cy="41.3" r=".8" fill="#5a1a14"/>
<circle cx="543.3" cy="41.3" r="3.6" fill="#0c0c0c"/>
<path d="M539.9 41.9A3.5 3.5 0 0 1 546.8 41.4Q543.5 43 539.9 41.9z" fill="#f6f6f6"/>
</g>
<!-- 15 Fertigungsrestr. -->
<g>
<path d="M554.8 40.9L569 48.1L587.2 41.3L573 36z" fill="none" stroke="#b4d2f0" stroke-width="1.1"/>
<path d="M566 23.9H578.1V46.9H575.4V26.6H566z" fill="#da2a18"/>
<path d="M563.5 28.7L570.2 29.9L570.6 43.7L562.7 41.3z" fill="#565656"/>
<path d="M570.2 29.9L575.3 27.9L576.1 42.1L570.6 43.7z" fill="#d4d4d4"/>
<path d="M563.5 28.7L568.8 27.2L575.3 27.9L570.2 29.9z" fill="#b8b8b8"/>
<path d="M571.4 43.6L577.7 41.8V46.9H574.5z" fill="#c82414"/>
<path d="M555.9 33L557.1 36.2H556.4V39.8H555.4V36.2H554.7zM569.4 38.9L570.7 42.5H570V47H568.8V42.5H568.1zM586.4 33.4L587.6 36.6H586.9V40H585.9V36.6H585.2z" fill="#d4e6fa" stroke="#7a9cc4" stroke-width=".35"/>
</g>
<!-- 16 Sickenmuster -->
<g>
<path d="M604.2 39.8L618.5 47.7L637.9 40.5L623.6 35.8z" fill="none" stroke="#aecbea" stroke-width="1.2"/>
<path d="M611.4 27.9L622.8 25.1L627.6 27.1V41.3L618.9 44.5L611.4 39z" fill="#9a9a9a"/>
<path d="M614.4 27.2L616.6 26.6L619.6 43.2L618 44.2L614.2 38.5z" fill="#e02a1c"/>
<path d="M615.4 27.6L618.4 27.4L620.6 43.6L618.9 44.3z" fill="#f0f0f0"/>
<path d="M618 27L621.6 26.2L623.4 42.6L620.8 43.6z" fill="#e8352a"/>
<path d="M621.2 26L623.2 25.6L625 41.6L623.2 42.4z" fill="#dcdcdc"/>
<path d="M622.8 25.2L626.4 26.4L627 41.2L624.8 42.2z" fill="#e02a1c"/>
<path d="M626.3 26.6L627.8 27.2V41L626.8 41.4z" fill="#b0b0b0"/>
</g>
<!-- 17 Analyse -->
<g>
<path d="M656.1 40.8Q657 36 659.4 32.9Q662 29.4 665 28.2Q668.5 27.2 672.5 27.7Q676.5 28.5 679.1 30.1Q682 33 682.3 36.6L681.9 40.4L674.4 41.3L663.1 45.5L657 42.7z" fill="url(#dome)"/>
<path d="M656.1 40.8Q656.8 38.5 657.6 36.8Q659 39 658.6 43.4L657 42.7z" fill="#e4483a"/>
<path d="M663.1 45.5Q662 44 662.5 41.6Q664.5 42.5 666.8 44.1z" fill="#e8402e"/>
<path d="M661.2 43.8Q662 38 665.5 33Q668.5 29.5 672 27.8" fill="none" stroke="#7ec0ff" stroke-width=".6" opacity=".8"/>
<path d="M680 37Q682 36 682.3 36.6L681.9 40.4L680.2 40.6z" fill="#e4483a"/>
<use href="#play" x="674.5" y="40.8"/>
</g>
<!-- 18 Optimieren -->
<g fill="none" stroke-linecap="round">
<path d="M698.2 40.6Q698.6 33 704.2 29.6Q709 27 713.4 28.6M703.6 44.2Q704.2 36.4 709.6 31.4Q714.6 27.4 719.4 28.6Q723.2 30.2 723.2 36.8M698.2 40.6L703.6 44.2L714.5 42.8M713.4 28.6L719.4 28.6M698.4 38L703.8 41.4M704.2 29.6L709.6 31.4M706.5 36.4L711.6 29M711.8 41.8L710.2 34.4L716.6 30.2M716.8 41L715 35L720.2 31.6M720.4 39.4L719.2 35.2L723 34" stroke="#585858" stroke-width="2.9"/>
<path d="M698.2 40.6Q698.6 33 704.2 29.6Q709 27 713.4 28.6M703.6 44.2Q704.2 36.4 709.6 31.4Q714.6 27.4 719.4 28.6Q723.2 30.2 723.2 36.8M698.2 40.6L703.6 44.2L714.5 42.8M713.4 28.6L719.4 28.6M698.4 38L703.8 41.4M704.2 29.6L709.6 31.4M706.5 36.4L711.6 29M711.8 41.8L710.2 34.4L716.6 30.2M716.8 41L715 35L720.2 31.6M720.4 39.4L719.2 35.2L723 34" stroke="#cdcdcd" stroke-width="1.7"/>
<use href="#play" x="715.6" y="40.8"/>
</g>
</svg>

<svg id="triad" width="960" height="540" viewBox="0 0 960 540" style="left:0;top:0">
<path d="M165.1 456.5L151.5 465.2" stroke="#9c1c1c" stroke-width="2.6"/>
<path d="M153.2 461.4L142 470.1L155.6 467.4z" fill="#d43030"/>
<path d="M165.1 456.5L181.7 464.3" stroke="#30d23a" stroke-width="2.6"/>
<path d="M181.8 461.2L190.8 469.1L179.4 467z" fill="#3cdc44"/><path d="M179.4 467L190.8 469.1L182 464.6z" fill="#1e8a28"/>
<path d="M165.1 457.2V440" stroke="#2a2ad8" stroke-width="3"/>
<path d="M165.1 456.8V440.5H166.7V456.8z" fill="#1a1a9c"/>
<path d="M161.9 441L165.4 431.6L168.6 441z" fill="#3434ea"/><path d="M165.4 431.6L168.6 441H165.3z" fill="#1c1cb0"/>
</svg>
<svg id="tb" width="960" height="540" viewBox="0 0 960 540" style="left:0;top:0;filter:blur(.3px)">
<defs><linearGradient id="tg" x1="0" y1="0" x2="0" y2="1"><stop offset="0" stop-color="#b8b8b8"/><stop offset="1" stop-color="#5a5a5a"/></linearGradient></defs>
<!-- eye -->
<path d="M120.4 522.2Q126 515.2 133.4 519.6Q132.6 526.2 126 527Q122 527 120.4 522.2z" fill="url(#tg)"/>
<path d="M122.4 522.4Q126.4 518.2 131.6 520.6Q130.4 524.6 126 525Q123.6 524.8 122.4 522.4z" fill="#e2e2e2"/>
<circle cx="127.6" cy="521.6" r="2.2" fill="#4a4a4a"/><circle cx="128.2" cy="521" r=".7" fill="#eee"/>
<path d="M120.4 522.2Q126 515.2 133.4 519.6" fill="none" stroke="#555" stroke-width="1"/>
<!-- camera -->
<path d="M137.4 519.6L141 518.4V516.4L144 515.8V518L149.4 519.4V525L142.8 527.4L137.4 525z" fill="url(#tg)"/>
<path d="M137.4 519.6L142.8 521.4V527.4L137.4 525z" fill="#6a6a6a"/>
<circle cx="146.2" cy="522.4" r="2.3" fill="#d8d8d8" stroke="#555" stroke-width=".7"/><circle cx="146.2" cy="522.4" r=".9" fill="#444"/>
<circle cx="144.6" cy="517" r="1.4" fill="#eee"/>
<!-- section -->
<path d="M155.2 518.6L161 517.6L164.2 518.8V524.6L158.4 526.2L155.2 524.6z" fill="#8a8a8a"/>
<path d="M155.2 518.6L158.4 519.8V526.2L155.2 524.6z" fill="#5a5a5a"/><path d="M158.4 519.8L164.2 518.8V524.6L158.4 526.2z" fill="#c4c4c4"/>
<path d="M152.8 517.4L159.6 519.4M158 516.4L166.4 518.8M152.8 523.6L159.6 526.4M158.6 524.6L166.4 526.8" stroke="#d02820" stroke-width="1"/>
<!-- square -->
<path d="M171 516.6V526.2H180.6" fill="none" stroke="#6a6a6a" stroke-width="1"/>
<path d="M171 516L169.9 518H172.1zM181.4 526.2L179.4 525.1V527.3z" fill="#6a6a6a"/>
<rect x="172.9" y="516.5" width="7.8" height="7.8" fill="#d42a22"/><rect x="173.4" y="517" width="3.6" height="3.6" fill="#ee6a60" opacity=".6"/>
<!-- zoom -->
<circle cx="189.8" cy="520.6" r="3.9" fill="#dfe3e8" stroke="#5e5e5e" stroke-width="1.3"/>
<path d="M192.6 523.6L196 527.2" stroke="#5a5a5a" stroke-width="1.7" stroke-linecap="round"/>
<rect x="188" y="519" width="3.6" height="3.4" fill="#d42a22"/><path d="M188 519L189 518.2H192.4L191.6 519z" fill="#f07a70"/>
<!-- 3D -->
<path d="M204.4 516.8Q210.6 515.6 212.6 520.2Q213.6 524.6 209.6 526.4L204.8 527.2L206.6 525.2Q210.4 524.4 210.2 520.8Q209.4 518.2 205.6 518.6z" fill="url(#tg)" stroke="#555" stroke-width=".4"/>
<path d="M206.2 518.8L207 525" stroke="#777" stroke-width="1.2"/>
<path d="M202.4 516.4L205.4 518.4M202.2 526.8L205.4 524.8M203 517L203 526.4" stroke="#d02820" stroke-width="1.1"/>
</svg>
<svg width="20" height="8" viewBox="0 0 20 8" style="left:87.5px;top:94px">
<path d="M1.2 6.6V3.4L2 1.2H3.2L3.6 3.4H4.4L4.8 1.2H6L6.8 3.4V6.6H4.4V4.6H3.6V6.6z" fill="#d6dbe2" stroke="#7e858e" stroke-width=".6"/>
<circle cx="11.6" cy="3.4" r="1.9" fill="none" stroke="#7e858e" stroke-width=".8"/><path d="M13 4.8L14.8 6.6" stroke="#7e858e" stroke-width=".9"/>
</svg>
<svg id="txt" width="960" height="540" viewBox="0 0 960 540" style="left:0;top:0">
<text x="3.80" y="9.20" font-size="7.6" fill="#dfeaf8" textLength="16.20" lengthAdjust="spacingAndGlyphs" class="m">Datei</text>
<text x="3.80" y="9.20" font-size="7.6" fill="#10161c" textLength="16.20" lengthAdjust="spacingAndGlyphs" class="mc">Datei</text>
<text x="26.70" y="9.20" font-size="7.6" fill="#dfeaf8" textLength="33.20" lengthAdjust="spacingAndGlyphs" class="m">Bearbeiten</text>
<text x="26.70" y="9.20" font-size="7.6" fill="#10161c" textLength="33.20" lengthAdjust="spacingAndGlyphs" class="mc">Bearbeiten</text>
<text x="67.00" y="9.20" font-size="7.6" fill="#dfeaf8" textLength="27.80" lengthAdjust="spacingAndGlyphs" class="m">Anzeigen</text>
<text x="67.00" y="9.20" font-size="7.6" fill="#10161c" textLength="27.80" lengthAdjust="spacingAndGlyphs" class="mc">Anzeigen</text>
<text x="101.70" y="9.20" font-size="7.6" fill="#dfeaf8" textLength="31.30" lengthAdjust="spacingAndGlyphs" class="m">Geometrie</text>
<text x="101.70" y="9.20" font-size="7.6" fill="#10161c" textLength="31.30" lengthAdjust="spacingAndGlyphs" class="mc">Geometrie</text>
<text x="140.30" y="9.20" font-size="7.6" fill="#dfeaf8" textLength="22.20" lengthAdjust="spacingAndGlyphs" class="m">Struktur</text>
<text x="140.30" y="9.20" font-size="7.6" fill="#10161c" textLength="22.20" lengthAdjust="spacingAndGlyphs" class="mc">Struktur</text>
<text x="169.50" y="9.20" font-size="7.6" fill="#dfeaf8" textLength="31.50" lengthAdjust="spacingAndGlyphs" class="m">Bewegung</text>
<text x="169.50" y="9.20" font-size="7.6" fill="#10161c" textLength="31.50" lengthAdjust="spacingAndGlyphs" class="mc">Bewegung</text>
<text x="209.20" y="9.20" font-size="7.6" fill="#dfeaf8" textLength="29.50" lengthAdjust="spacingAndGlyphs" class="m">Tiefziehen</text>
<text x="209.20" y="9.20" font-size="7.6" fill="#10161c" textLength="29.50" lengthAdjust="spacingAndGlyphs" class="mc">Tiefziehen</text>
<text x="243.17" y="9.60" font-size="9" fill="#7f8890">+</text>
<text x="8.70" y="60.00" font-size="7.2" fill="#1c2026" textLength="23.00" lengthAdjust="spacingAndGlyphs" stroke="#1c2026" stroke-width="0.15" class="lb">Dateien</text>
<text x="46.70" y="60.00" font-size="7.2" fill="#1c2026" textLength="23.60" lengthAdjust="spacingAndGlyphs" stroke="#1c2026" stroke-width="0.15" class="lb">Messen</text>
<text x="78.00" y="60.00" font-size="7.2" fill="#1c2026" textLength="33.30" lengthAdjust="spacingAndGlyphs" stroke="#1c2026" stroke-width="0.15" class="lb">Verschiebe</text>
<text x="92.90" y="67.70" font-size="7.2" fill="#1c2026" stroke="#1c2026" stroke-width="0.15" class="lb">n</text>
<text x="122.40" y="60.00" font-size="7.2" fill="#1c2026" textLength="39.00" lengthAdjust="spacingAndGlyphs" stroke="#1c2026" stroke-width="0.15" class="lb">Befestigungs</text>
<text x="140.80" y="67.70" font-size="7.2" fill="#1c2026" stroke="#1c2026" stroke-width="0.15" class="lb">-</text>
<text x="128.00" y="75.80" font-size="7.2" fill="#1c2026" textLength="27.80" lengthAdjust="spacingAndGlyphs" stroke="#1c2026" stroke-width="0.15" class="lb">elemente</text>
<text x="169.00" y="60.00" font-size="7.2" fill="#1c2026" textLength="25.20" lengthAdjust="spacingAndGlyphs" stroke="#1c2026" stroke-width="0.15" class="lb">Gelenke</text>
<text x="202.70" y="60.00" font-size="7.2" fill="#1c2026" textLength="33.60" lengthAdjust="spacingAndGlyphs" stroke="#1c2026" stroke-width="0.15" class="lb">Konnektore</text>
<text x="217.70" y="67.70" font-size="7.2" fill="#1c2026" stroke="#1c2026" stroke-width="0.15" class="lb">n</text>
<text x="243.70" y="60.00" font-size="7.2" fill="#1c2026" textLength="26.30" lengthAdjust="spacingAndGlyphs" stroke="#1c2026" stroke-width="0.15" class="lb">Kontakte</text>
<text x="296.00" y="60.00" font-size="7.2" fill="#1c2026" textLength="19.80" lengthAdjust="spacingAndGlyphs" stroke="#1c2026" stroke-width="0.15" class="lb">Lasten</text>
<text x="332.00" y="60.00" font-size="7.2" fill="#1c2026" textLength="22.00" lengthAdjust="spacingAndGlyphs" stroke="#1c2026" stroke-width="0.15" class="lb">Versch.</text>
<text x="370.60" y="60.00" font-size="7.2" fill="#1c2026" textLength="21.90" lengthAdjust="spacingAndGlyphs" stroke="#1c2026" stroke-width="0.15" class="lb">Beschl.</text>
<text x="403.50" y="60.00" font-size="7.2" fill="#1c2026" textLength="32.10" lengthAdjust="spacingAndGlyphs" stroke="#1c2026" stroke-width="0.15" class="lb">Gravitation</text>
<text x="449.20" y="60.00" font-size="7.2" fill="#1c2026" textLength="18.80" lengthAdjust="spacingAndGlyphs" stroke="#1c2026" stroke-width="0.15" class="lb">Temp.</text>
<text x="478.40" y="60.00" font-size="7.2" fill="#1c2026" textLength="33.20" lengthAdjust="spacingAndGlyphs" stroke="#1c2026" stroke-width="0.15" class="lb">Materialien</text>
<text x="517.20" y="60.00" font-size="7.2" fill="#1c2026" textLength="24.20" lengthAdjust="spacingAndGlyphs" stroke="#1c2026" stroke-width="0.15" class="lb">Massen</text>
<text x="549.60" y="60.00" font-size="7.2" fill="#1c2026" textLength="45.00" lengthAdjust="spacingAndGlyphs" stroke="#1c2026" stroke-width="0.15" class="lb">Fertigungsrestr.</text>
<text x="600.00" y="60.00" font-size="7.2" fill="#1c2026" textLength="40.70" lengthAdjust="spacingAndGlyphs" stroke="#1c2026" stroke-width="0.15" class="lb">Sickenmuster</text>
<text x="659.30" y="60.00" font-size="7.2" fill="#1c2026" textLength="24.40" lengthAdjust="spacingAndGlyphs" stroke="#1c2026" stroke-width="0.15" class="lb">Analyse</text>
<text x="698.30" y="60.00" font-size="7.2" fill="#1c2026" textLength="32.70" lengthAdjust="spacingAndGlyphs" stroke="#1c2026" stroke-width="0.15" class="lb">Optimieren</text>
<text x="51.70" y="87.40" font-size="8.0" fill="#1c2026" textLength="21.30" lengthAdjust="spacingAndGlyphs" stroke="#1c2026" stroke-width="0.15" class="lb">Home</text>
<text x="177.00" y="87.40" font-size="8.0" fill="#1c2026" textLength="50.10" lengthAdjust="spacingAndGlyphs" stroke="#1c2026" stroke-width="0.15" class="lb">Verbindungen</text>
<text x="455.60" y="87.40" font-size="8.0" fill="#1c2026" textLength="21.30" lengthAdjust="spacingAndGlyphs" stroke="#1c2026" stroke-width="0.15" class="lb">Setup</text>
<text x="678.00" y="87.40" font-size="8.0" fill="#1c2026" textLength="36.70" lengthAdjust="spacingAndGlyphs" stroke="#1c2026" stroke-width="0.15" class="lb">Ausführen</text>
<text x="1.80" y="101.50" font-size="8.2" fill="#23272d" textLength="58.50" lengthAdjust="spacingAndGlyphs" stroke="#23272d" stroke-width="0.15">Modellübersicht</text>
<text x="1.80" y="305.90" font-size="8.2" fill="#23272d" textLength="73.00" lengthAdjust="spacingAndGlyphs" stroke="#23272d" stroke-width="0.15">Eigenschafteneditor</text>
<text x="3.75" y="113.30" font-size="7.0" fill="#23272d" textLength="19.40" lengthAdjust="spacingAndGlyphs" stroke="#23272d" stroke-width="0.15">Objekt</text>
<text x="104.30" y="113.30" font-size="7.0" fill="#23272d" stroke="#23272d" stroke-width="0.15">M</text>
<text x="3.90" y="317.50" font-size="7.0" fill="#23272d" textLength="18.10" lengthAdjust="spacingAndGlyphs" stroke="#23272d" stroke-width="0.15">Name</text>
<text x="54.20" y="317.50" font-size="7.0" fill="#23272d" textLength="14.10" lengthAdjust="spacingAndGlyphs" stroke="#23272d" stroke-width="0.15">Wert</text>
<text x="893.10" y="537.25" font-size="6.9" fill="#33373d" textLength="55.90" lengthAdjust="spacingAndGlyphs" stroke="#33373d" stroke-width="0.15">MPA (mm t N MPa)</text>
<text x="23.75" y="122.75" font-size="7.0" fill="#1f2329" textLength="24.10" lengthAdjust="spacingAndGlyphs" stroke="#1f2329" stroke-width="0.15">Lastfälle</text>
<text x="33.50" y="131.75" font-size="7.0" fill="#1f2329" textLength="65.25" lengthAdjust="spacingAndGlyphs" stroke="#1f2329" stroke-width="0.15">Alle Lasten. Verschie..</text>
<text x="33.75" y="140.75" font-size="7.0" fill="#14171b" textLength="30.25" lengthAdjust="spacingAndGlyphs" font-weight="bold" stroke="#14171b" stroke-width="0.15">Lastfall 1</text>
<text x="43.75" y="149.75" font-size="7.0" fill="#1f2329" textLength="43.50" lengthAdjust="spacingAndGlyphs" stroke="#1f2329" stroke-width="0.15">Einspannung 5</text>
<text x="43.75" y="158.75" font-size="7.0" fill="#1f2329" textLength="43.50" lengthAdjust="spacingAndGlyphs" stroke="#1f2329" stroke-width="0.15">Einspannung 3</text>
<text x="43.75" y="167.75" font-size="7.0" fill="#1f2329" textLength="43.50" lengthAdjust="spacingAndGlyphs" stroke="#1f2329" stroke-width="0.15">Einspannung 2</text>
<text x="43.75" y="176.75" font-size="7.0" fill="#1f2329" textLength="43.50" lengthAdjust="spacingAndGlyphs" stroke="#1f2329" stroke-width="0.15">Einspannung 1</text>
<text x="43.75" y="185.75" font-size="7.0" fill="#1f2329" textLength="43.50" lengthAdjust="spacingAndGlyphs" stroke="#1f2329" stroke-width="0.15">Einspannung 6</text>
<text x="43.75" y="194.75" font-size="7.0" fill="#1f2329" textLength="43.50" lengthAdjust="spacingAndGlyphs" stroke="#1f2329" stroke-width="0.15">Einspannung 7</text>
<text x="43.75" y="203.75" font-size="7.0" fill="#1f2329" textLength="18.60" lengthAdjust="spacingAndGlyphs" stroke="#1f2329" stroke-width="0.15">Kraft 2</text>
<text x="43.75" y="212.75" font-size="7.0" fill="#1f2329" textLength="43.50" lengthAdjust="spacingAndGlyphs" stroke="#1f2329" stroke-width="0.15">Einspannung 8</text>
<text x="43.75" y="221.75" font-size="7.0" fill="#1f2329" textLength="43.50" lengthAdjust="spacingAndGlyphs" stroke="#1f2329" stroke-width="0.15">Einspannung 4</text>
<text x="43.75" y="230.75" font-size="7.0" fill="#1f2329" textLength="18.60" lengthAdjust="spacingAndGlyphs" stroke="#1f2329" stroke-width="0.15">Kraft 3</text>
<text x="43.75" y="239.75" font-size="7.0" fill="#1f2329" textLength="43.50" lengthAdjust="spacingAndGlyphs" stroke="#1f2329" stroke-width="0.15">Einspannung 9</text>
<text x="43.75" y="248.75" font-size="7.0" fill="#1f2329" textLength="47.50" lengthAdjust="spacingAndGlyphs" stroke="#1f2329" stroke-width="0.15">Einspannung 10</text>
<text x="43.75" y="257.75" font-size="7.0" fill="#1f2329" textLength="47.50" lengthAdjust="spacingAndGlyphs" stroke="#1f2329" stroke-width="0.15">Einspannung 11</text>
<text x="43.75" y="266.75" font-size="7.0" fill="#1f2329" textLength="47.50" lengthAdjust="spacingAndGlyphs" stroke="#1f2329" stroke-width="0.15">Einspannung 12</text>
<text x="24.00" y="275.75" font-size="7.0" fill="#bfc3c8" textLength="66.70" lengthAdjust="spacingAndGlyphs" stroke="#bfc3c8" stroke-width="0.15">Fertigungsrestriktionen</text>
<text x="34.00" y="284.75" font-size="7.0" fill="#c4c8cc" textLength="62.50" lengthAdjust="spacingAndGlyphs" stroke="#c4c8cc" stroke-width="0.15">Fertigungsrestriktion..</text>
<text x="383.40" y="27.60" font-size="7.5" fill="#1c1c1c" font-weight="bold" font-style="italic">g</text>
<text x="364.60" y="49.60" font-size="6.5" fill="#2a2a2a">ω</text>
<text x="418.00" y="43.00" font-size="11" fill="#0a0a0a" font-weight="bold">G</text>
<text x="487.70" y="40.60" font-size="8" fill="#141414" textLength="7.40" lengthAdjust="spacingAndGlyphs" font-weight="bold">Fe</text>
<text x="498.00" y="43.40" font-size="8" fill="#141414" textLength="5.80" lengthAdjust="spacingAndGlyphs" font-weight="bold">Al</text>
<text x="163.20" y="431.00" font-size="7.6" fill="#3c4046" stroke="#3c4046" stroke-width="0.1">Z</text>
<text x="135.20" y="475.80" font-size="7.2" fill="#70757c" font-style="italic">X</text>
<text x="193.80" y="475.00" font-size="7.2" fill="#6a6f76" font-style="italic">Y</text>
</svg>
</div>
</body></html>
